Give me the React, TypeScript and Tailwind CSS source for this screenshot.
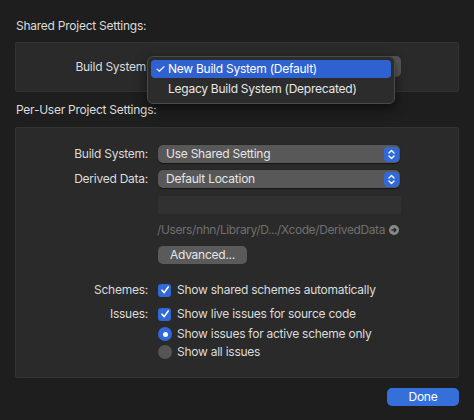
import React from "react";

const font = { fontFamily: "Inter, 'Noto Sans', sans-serif" };

function Stepper() {
  return (
    <span className="flex h-[15px] w-[15px] items-center justify-center rounded-[4px] bg-[#3169d6]">
      <svg width="9" height="11" viewBox="0 0 9 11" fill="none" stroke="white" strokeWidth="1.4" strokeLinecap="round" strokeLinejoin="round">
        <path d="M2 4 L4.5 1.6 L7 4" />
        <path d="M2 7 L4.5 9.4 L7 7" />
      </svg>
    </span>
  );
}

function Popup({ label }: { label: string }) {
  return (
    <div className="flex h-[18px] w-[242px] items-center justify-between rounded-[5px] bg-[#585858] pl-[8px] pr-[1.5px] text-[#e6e6e6] shadow-[0_0.5px_1px_rgba(0,0,0,0.5)]">
      <span>{label}</span>
      <Stepper />
    </div>
  );
}

function Check({ label }: { label: string }) {
  return (
    <div className="flex items-center gap-[6px]">
      <span className="flex h-[13px] w-[13px] items-center justify-center rounded-[3px] bg-[#3169d6]">
        <svg width="10" height="10" viewBox="0 0 10 10" fill="none" stroke="white" strokeWidth="1.6" strokeLinecap="round" strokeLinejoin="round">
          <path d="M2 5.2 L4.2 7.6 L8.2 2" />
        </svg>
      </span>
      <span>{label}</span>
    </div>
  );
}

function Radio({ label, on }: { label: string; on?: boolean }) {
  return (
    <div className="flex items-center gap-[5px]">
      <span className={`flex h-[14px] w-[14px] items-center justify-center rounded-full ${on ? "bg-[#3169d6]" : "bg-[#555555]"}`}>
        {on && <span className="h-[5px] w-[5px] rounded-full bg-white" />}
      </span>
      <span>{label}</span>
    </div>
  );
}

export default function App() {
  return (
    <div style={font} className="flex h-[420px] w-[474px] flex-col bg-[#1e1e1e] px-[15px] text-[12px] leading-[16px] tracking-[-0.25px] text-[#dcdcdc]">
      <p className="mt-[18px] h-[16px] pl-px">Shared Project Settings:</p>

      {/* Shared box with open menu */}
      <div className="relative mt-[8px] flex h-[50px] items-center rounded-[2px] border border-[#333] bg-[#2a2a2a]">
        <span className="w-[130px] text-right">Build System</span>
        <div className="ml-[5px] mt-[-2px] h-[21px] w-[250px] rounded-[5px] bg-[#585858]" />

        <div className="absolute left-[131px] top-[13px] z-10 w-[248px] rounded-[6px] border border-[#4a4a4a] bg-[#2c2c2c] p-[3px] text-[#e8e8e8] shadow-[0_4px_12px_rgba(0,0,0,0.6)]">
          <div className="flex h-[18px] items-center rounded-[4px] bg-[#2f62d0] px-[3px] text-white">
            <span className="w-[14px] pl-px">✓</span>
            <span>New Build System (Default)</span>
          </div>
          <div className="flex h-[22px] items-center pl-[17px]">Legacy Build System (Deprecated)</div>
        </div>
      </div>

      <p className="mt-[10px] h-[16px] pl-px">Per-User Project Settings:</p>

      <div className="mt-[9px] flex h-[251px] flex-col rounded-[2px] border border-[#333] bg-[#2a2a2a] pt-[17px]">
        <div className="grid grid-cols-[132px_auto] gap-x-[10px]">
          <span className="self-center text-right">Build System:</span>
          <Popup label="Use Shared Setting" />

          <span className="mt-[7px] self-center text-right">Derived Data:</span>
          <div className="mt-[7px]">
            <Popup label="Default Location" />
          </div>

          <span />
          <div className="mt-[8px] h-[18px] w-[243px] bg-[#313131]" />

          <span />
          <div className="mt-[8px] flex h-[16px] w-[243px] items-center gap-[4px] text-[#6f6f6f]">
            <span className="-ml-px tracking-[-0.4px]">/Users/nhn/Library/D.../Xcode/DerivedData</span>
            <span className="flex h-[10px] w-[10px] items-center justify-center rounded-full bg-[#8a8a8a]">
              <svg width="8" height="8" viewBox="0 0 8 8" fill="none" stroke="#2a2a2a" strokeWidth="1.3" strokeLinecap="round" strokeLinejoin="round">
                <path d="M1.8 4 H6 M4.2 2.2 L6 4 L4.2 5.8" />
              </svg>
            </span>
          </div>

          <span />
          <div className="mt-[8px]">
            <div className="flex h-[18px] w-[89px] items-center justify-center rounded-[5px] bg-[#5a5a5a] text-[#e6e6e6]">Advanced...</div>
          </div>

          <span className="mt-[18px] text-right">Schemes:</span>
          <div className="mt-[18px]">
            <Check label="Show shared schemes automatically" />
          </div>

          <span className="mt-[8px] text-right">Issues:</span>
          <div className="mt-[8px] flex flex-col">
            <Check label="Show live issues for source code" />
            <div className="mt-[4px]">
              <Radio on label="Show issues for active scheme only" />
            </div>
            <div className="mt-[2px]">
              <Radio label="Show all issues" />
            </div>
          </div>
        </div>
      </div>

      <div className="mt-[10px] flex justify-end">
        <button className="h-[18px] w-[72px] rounded-[5px] bg-[#3570da] text-white">Done</button>
      </div>
    </div>
  );
}
